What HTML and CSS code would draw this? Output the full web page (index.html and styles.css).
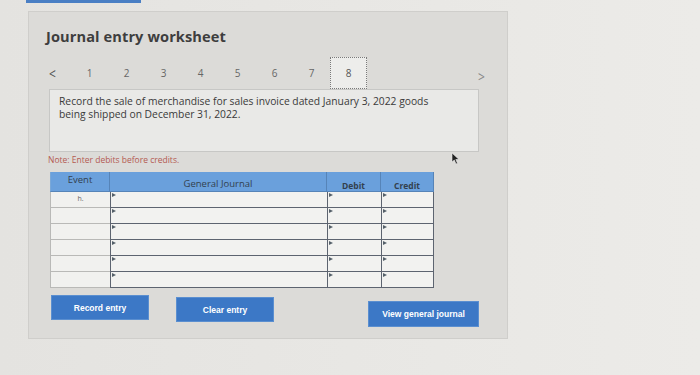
FILE: index.html
```html
<!DOCTYPE html>
<html>
<head>
<meta charset="utf-8">
<link rel="stylesheet" href="styles.css">
</head>
<body>
<div class="screen">
  <div class="topbar"></div>
  <div class="panel">
    <h1 class="title">Journal entry worksheet</h1>
    <div class="nav">
      <span class="tab arrow">&lt;</span>
      <span class="tab">1</span>
      <span class="tab">2</span>
      <span class="tab">3</span>
      <span class="tab">4</span>
      <span class="tab">5</span>
      <span class="tab">6</span>
      <span class="tab">7</span>
      <span class="tab active">8</span>
      <span class="tab arrow next">&gt;</span>
    </div>
    <div class="prompt">Record the sale of merchandise for sales invoice dated January 3, 2022 goods being shipped on December 31, 2022.</div>
    <div class="note-row">
      <p class="note">Note: Enter debits before credits.</p>
      <svg class="cursor" width="9" height="13" viewBox="0 0 9 13"><path d="M1 1 L1 10 L3.3 8 L5 12 L6.5 11.3 L4.8 7.5 L8 7.5 Z" fill="#222" stroke="#eee" stroke-width="0.6"/></svg>
    </div>
    <div class="journal">
      <div class="hd ev">Event</div>
      <div class="hd gj">General Journal</div>
      <div class="hd db">Debit</div>
      <div class="hd cr">Credit</div>

      <div class="ev cell">h.</div><div class="in gj"></div><div class="in db"></div><div class="in cr"></div>
      <div class="ev cell"></div><div class="in gj"></div><div class="in db"></div><div class="in cr"></div>
      <div class="ev cell"></div><div class="in gj"></div><div class="in db"></div><div class="in cr"></div>
      <div class="ev cell"></div><div class="in gj"></div><div class="in db"></div><div class="in cr"></div>
      <div class="ev cell"></div><div class="in gj"></div><div class="in db"></div><div class="in cr"></div>
      <div class="ev cell"></div><div class="in gj"></div><div class="in db"></div><div class="in cr"></div>
    </div>
    <div class="buttons">
      <button class="btn rec">Record entry</button>
      <button class="btn clr">Clear entry</button>
      <button class="btn view">View general journal</button>
    </div>
  </div>
</div>
</body>
</html>
```
FILE: styles.css
```css
html, body {
  margin: 0;
  padding: 0;
}
body {
  width: 700px;
  height: 375px;
  overflow: hidden;
  background: linear-gradient(90deg, #e4e3e0 0%, #e8e7e4 50%, #ecebe8 100%);
  font-family: "Open Sans", "DejaVu Sans", sans-serif;
}
.screen {
  display: flex;
  flex-direction: column;
  padding-left: 26px;
}
.topbar {
  width: 115px;
  height: 3px;
  background: #4a7fc4;
}
.panel {
  margin-top: 8px;
  margin-left: 2px;
  width: 480px;
  height: 328px;
  box-sizing: border-box;
  background: #dcdbd8;
  border: 1px solid #cfcecb;
  padding: 14px 0 0 17px;
  display: flex;
  flex-direction: column;
}
.title {
  margin: 0;
  font-size: 14.6px;
  line-height: 20px;
  font-weight: 700;
  color: #3e3e3e;
  letter-spacing: 0.1px;
}
.nav {
  margin-top: 11px;
  margin-left: -12px;
  width: 466px;
  height: 32px;
  display: flex;
  align-items: center;
}
.tab {
  width: 37px;
  height: 32px;
  box-sizing: border-box;
  display: flex;
  align-items: center;
  justify-content: center;
  font-size: 10px;
  color: #666;
}
.tab.arrow {
  font-size: 15px;
  color: #555;
  transform: scaleX(0.8);
}
.tab.next {
  margin-left: auto;
  color: #888;
  padding-top: 6px;
}
.tab.active {
  border: 1.5px dotted #7a7a7a;
  background: #ededeb;
  color: #555;
}
.prompt {
  margin-left: 3px;
  width: 430px;
  height: 63px;
  box-sizing: border-box;
  background: #e9e9e7;
  border: 1px solid #c7c7c5;
  padding: 5px 40px 5px 9px;
  font-size: 10.3px;
  line-height: 13px;
  color: #3a3a3a;
}
.note-row {
  position: relative;
  height: 20px;
}
.note {
  margin: 0;
  padding: 2px 0 0 2px;
  font-size: 8.5px;
  color: #b45a52;
}
.cursor {
  position: absolute;
  left: 405px;
  top: 0px;
}
.journal {
  margin-left: 4px;
  width: 384px;
  display: grid;
  grid-template-columns: 60px 217px 54px 53px;
  grid-template-rows: 20px repeat(6, 16px);
  background: #f1f1ef;
}
.hd {
  background: #6aa0dc;
  color: #33404e;
  font-size: 9.5px;
  display: flex;
  align-items: center;
  justify-content: center;
  border-right: 1px solid #5684b8;
  border-bottom: 1px solid #5684b8;
  box-sizing: border-box;
}
.hd.ev {
  align-items: flex-start;
  padding-top: 1px;
  border-left: 1px solid #7aa8d8;
}
.hd.db, .hd.cr {
  font-weight: 700;
  font-size: 8.5px;
  padding-top: 7px;
}
.hd.gj {
  padding-top: 3px;
}
.cell {
  box-sizing: border-box;
  border-left: 1px solid #b9b9b7;
  border-bottom: 1px solid #b9b9b7;
  font-size: 7px;
  color: #666;
  text-align: center;
  padding-top: 2px;
}
.in {
  position: relative;
  box-sizing: border-box;
  border: 1.5px solid #5d6470;
  border-top: 0;
  background: #f2f2f0;
}
.in.gj, .in.db {
  border-right: 0;
}
.in::before {
  content: "";
  position: absolute;
  left: 1px;
  top: 1px;
  border-left: 4px solid #55606a;
  border-top: 2px solid transparent;
  border-bottom: 2px solid transparent;
}
.buttons {
  margin-top: 8px;
  margin-left: 6px;
  display: flex;
  align-items: flex-start;
}
.btn {
  border: 0;
  background: #3c78c6;
  color: #fff;
  font-family: "Liberation Sans", Arial, sans-serif;
  font-weight: 700;
  font-size: 8.5px;
  height: 23px;
  padding: 0;
  box-shadow: 0 0 0 1px #5b8fd0;
}
.btn.rec {
  width: 96px;
}
.btn.clr {
  width: 96px;
  margin-left: 29px;
  margin-top: 2px;
}
.btn.view {
  width: 109px;
  height: 24px;
  margin-left: 96px;
  margin-top: 6px;
}
```
